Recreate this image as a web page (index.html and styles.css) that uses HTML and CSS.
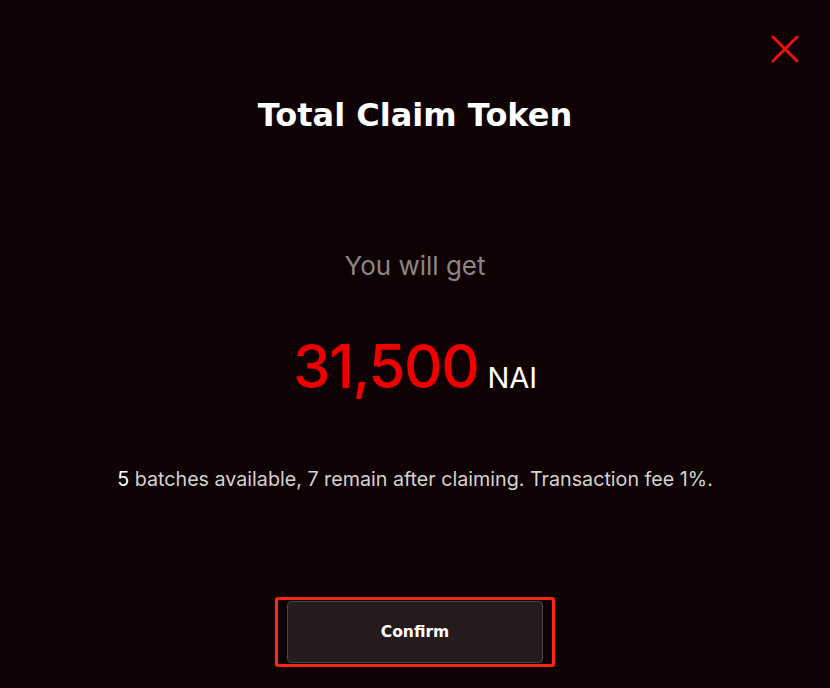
FILE: index.html
```html
<!DOCTYPE html>
<html>
<head>
<meta charset="utf-8">
<link rel="stylesheet" href="styles.css">
</head>
<body>
<div class="modal">
  <button class="close" aria-label="Close">
    <svg width="28" height="28" viewBox="0 0 28 28"><path d="M2 2 L26 26 M26 2 L2 26" stroke="#f01010" stroke-width="3" stroke-linecap="round" fill="none"/></svg>
  </button>
  <h1 class="title">Total Claim Token</h1>
  <p class="label">You will get</p>
  <div class="amount"><span class="num">31,500</span><span class="unit">NAI</span></div>
  <p class="info"><span class="hl">5</span> batches available, 7 remain after claiming. Transaction fee 1%.</p>
  <div class="actions">
    <div class="focus">
      <button class="confirm">Confirm</button>
    </div>
  </div>
</div>
</body>
</html>
```
FILE: styles.css
```css
* { box-sizing: border-box; }
html, body { margin: 0; padding: 0; background: #0f0204; }
body { width: 830px; height: 688px; overflow: hidden; font-family: "Inter", "Liberation Sans", sans-serif; }
.modal { position: relative; height: 688px; display: flex; flex-direction: column; align-items: center; }
.close { position: absolute; top: 35px; right: 31px; background: none; border: 0; padding: 0; width: 28px; height: 28px; cursor: pointer; }
.close svg { display: block; }
.title { margin: 96px 0 0; font-family: "DejaVu Sans", sans-serif; font-weight: 700; font-size: 32px; line-height: 38px; color: #fff; letter-spacing: 0; }
.label { margin: 117px 0 0; font-size: 26px; line-height: 30px; color: #8c8587; }
.amount { margin-top: 50px; display: flex; align-items: baseline; gap: 9px; }
.num { font-size: 60px; line-height: 70px; color: #ee0000; letter-spacing: -1.5px; font-weight: 500; }
.unit { font-size: 29px; color: #fff; }
.info { margin: 66px 0 0; font-size: 19.7px; line-height: 24px; color: #d6d1d2; }
.hl { color: #fff; }
.actions { margin-top: 106px; }
.focus { border: 3px solid #ff2616; border-radius: 3px; padding: 1px 9px; }
.confirm { display: block; width: 256px; height: 62px; background: #261b1c; border: 1px solid #4b4345; border-radius: 4px; color: #fff; font-family: "DejaVu Sans", sans-serif; font-weight: 700; font-size: 15.5px; cursor: pointer; }
```
